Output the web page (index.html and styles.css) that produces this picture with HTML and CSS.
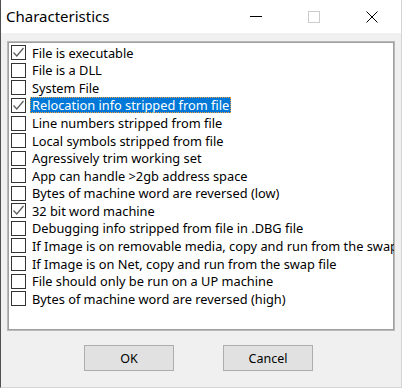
FILE: index.html
```html
<!DOCTYPE html>
<html>
<head>
<meta charset="utf-8">
<link rel="stylesheet" href="styles.css">
</head>
<body>
<div class="window">
  <div class="titlebar">
    <div class="title">Characteristics</div>
    <div class="caption-buttons">
      <div class="cbtn">
        <svg width="12" height="12" viewBox="0 0 12 12"><path d="M0 5.5H12" stroke="#000" stroke-width="1"/></svg>
      </div>
      <div class="cbtn">
        <svg width="12" height="12" viewBox="0 0 12 12"><rect x="0.5" y="0.5" width="11" height="11" fill="none" stroke="#cccccc" stroke-width="1"/></svg>
      </div>
      <div class="cbtn">
        <svg width="12" height="12" viewBox="0 0 12 12"><path d="M0.5 0.5L11.5 11.5M11.5 0.5L0.5 11.5" stroke="#000" stroke-width="1"/></svg>
      </div>
    </div>
  </div>
  <div class="client">
    <div class="listbox">
      <div class="row"><span class="cb checked"><svg viewBox="0 0 13 13" width="13" height="13"><path d="M1.5 6.5L4.8 10L11.5 2" fill="none" stroke="#5e5e5e" stroke-width="1.3"/></svg></span><span class="label">File is executable</span></div>
      <div class="row"><span class="cb"></span><span class="label">File is a DLL</span></div>
      <div class="row"><span class="cb"></span><span class="label">System File</span></div>
      <div class="row"><span class="cb checked"><svg viewBox="0 0 13 13" width="13" height="13"><path d="M1.5 6.5L4.8 10L11.5 2" fill="none" stroke="#5e5e5e" stroke-width="1.3"/></svg></span><span class="label selected">Relocation info stripped from file</span></div>
      <div class="row"><span class="cb"></span><span class="label">Line numbers stripped from file</span></div>
      <div class="row"><span class="cb"></span><span class="label">Local symbols stripped from file</span></div>
      <div class="row"><span class="cb"></span><span class="label">Agressively trim working set</span></div>
      <div class="row"><span class="cb"></span><span class="label">App can handle &gt;2gb address space</span></div>
      <div class="row"><span class="cb"></span><span class="label">Bytes of machine word are reversed (low)</span></div>
      <div class="row"><span class="cb checked"><svg viewBox="0 0 13 13" width="13" height="13"><path d="M1.5 6.5L4.8 10L11.5 2" fill="none" stroke="#5e5e5e" stroke-width="1.3"/></svg></span><span class="label">32 bit word machine</span></div>
      <div class="row"><span class="cb"></span><span class="label">Debugging info stripped from file in .DBG file</span></div>
      <div class="row"><span class="cb"></span><span class="label">If Image is on removable media, copy and run from the swap file</span></div>
      <div class="row"><span class="cb"></span><span class="label">If Image is on Net, copy and run from the swap file</span></div>
      <div class="row"><span class="cb"></span><span class="label">File should only be run on a UP machine</span></div>
      <div class="row"><span class="cb"></span><span class="label">Bytes of machine word are reversed (high)</span></div>
    </div>
    <div class="buttons">
      <div class="btn">OK</div>
      <div class="btn">Cancel</div>
    </div>
  </div>
</div>
</body>
</html>
```
FILE: styles.css
```css
html, body {
  margin: 0;
  padding: 0;
  background: #f0f0f0;
}
.window {
  width: 402px;
  height: 388px;
  box-sizing: border-box;
  border-left: 1px solid #505050;
  border-right: 1px solid #d4d4d4;
  border-bottom: 1px solid #d4d4d4;
  display: flex;
  flex-direction: column;
  font-family: "Noto Sans", "Open Sans", sans-serif;
  overflow: hidden;
}
.titlebar {
  height: 33px;
  background: #fff;
  display: flex;
  align-items: center;
  flex-shrink: 0;
}
.title {
  flex: 1;
  padding-left: 5px;
  font-size: 15px;
  color: #000;
  padding-bottom: 1px;
}
.caption-buttons {
  display: flex;
  height: 100%;
}
.cbtn {
  width: 58px;
  display: flex;
  align-items: center;
  justify-content: center;
}
.cbtn svg { display: block; }
.client {
  flex: 1;
  background: #f0f0f0;
  padding: 8px 6px 0 6px;
  display: flex;
  flex-direction: column;
}
.listbox {
  height: 290px;
  flex-shrink: 0;
  box-sizing: border-box;
  background: #fff;
  border: 1px solid #b9b9b9;
  box-shadow: inset 0 0 0 1px #a0a0a0;
  padding: 2px 2px;
  overflow: hidden;
}
.row {
  height: 17.57px;
  display: flex;
  align-items: center;
  white-space: nowrap;
  font-size: 12.8px;
  color: #000;
}
.cb {
  width: 13px;
  height: 13px;
  border: 1px solid #333;
  background: #fff;
  margin-left: 1px;
  margin-right: 4px;
  flex-shrink: 0;
}
.cb svg { display: block; }
.label {
  padding: 0 2px;
  line-height: 16px;
}
.label.selected {
  background: #0078d7;
  color: #fff;
  outline: 1px dotted #f0a040;
  outline-offset: -1px;
}
.buttons {
  display: flex;
  justify-content: flex-start;
  gap: 49px;
  padding-top: 14px;
  padding-left: 77px;
}
.btn {
  width: 88px;
  height: 24px;
  border: 1px solid #adadad;
  background: #e1e1e1;
  font-size: 12.5px;
  display: flex;
  align-items: center;
  justify-content: center;
  color: #000;
}
```
